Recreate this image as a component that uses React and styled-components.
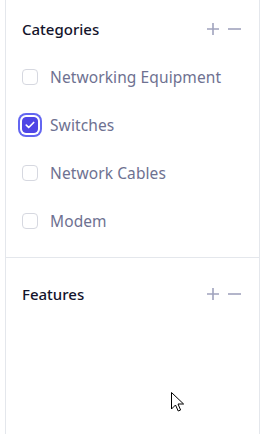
import styled, { createGlobalStyle } from 'styled-components';

const GlobalStyle = createGlobalStyle`
  html, body {
    margin: 0;
    padding: 0;
    background: #fff;
    font-family: "Noto Sans", "Liberation Sans", sans-serif;
  }
`;

const Page = styled.div`
  position: relative;
  width: 261px;
  height: 434px;
  padding-left: 5px;
  box-sizing: border-box;
  overflow: hidden;
`;

const Panel = styled.aside`
  width: 255px;
  height: 100%;
  box-sizing: border-box;
  border-left: 1px solid #e4e7ec;
  border-right: 1px solid #e4e7ec;
  background: #fff;
`;

const Section = styled.section`
  padding: ${props => (props.divided ? '16px 17px 24px 16px' : '23px 17px 0 16px')};
  border-bottom: ${props => (props.divided ? '1px solid #e4e7ec' : 'none')};
`;

const Header = styled.div`
  display: flex;
  align-items: center;
  justify-content: space-between;
  height: 26px;
`;

const Title = styled.h3`
  margin: 0;
  font-size: 15px;
  font-weight: 500;
  color: #14142b;
`;

const Tools = styled.div`
  display: flex;
  align-items: center;
  gap: 9px;
  padding-right: 1px;
  color: #a0a3bd;
`;

const ToolButton = styled.button`
  display: flex;
  padding: 0;
  border: 0;
  background: none;
  color: inherit;
  cursor: pointer;
`;

const List = styled.ul`
  list-style: none;
  margin: 23px 0 0;
  padding: 0;
  display: flex;
  flex-direction: column;
  gap: 24px;
`;

const Item = styled.li`
  display: flex;
  align-items: center;
  gap: 12px;
  height: 24px;
`;

const Box = styled.span`
  flex-shrink: 0;
  display: flex;
  align-items: center;
  justify-content: center;
  width: 16px;
  height: 16px;
  box-sizing: border-box;
  border-radius: 4px;
  border: 1px solid ${props => (props.checked ? '#4f46e5' : '#d6d8e0')};
  background: ${props => (props.checked ? '#4f46e5' : '#fff')};
  box-shadow: ${props => (props.checked ? '0 0 0 2px #fff, 0 0 0 4px #6366f1' : 'none')};
`;

const Label = styled.span`
  font-size: 15.5px;
  letter-spacing: 0.1px;
  color: #6e7191;
`;

const Cursor = styled.svg`
  position: absolute;
  left: 171px;
  top: 392px;
`;

const PlusIcon = () => (
  <svg width="12" height="12" viewBox="0 0 12 12">
    <path d="M6 0v12M0 6h12" stroke="currentColor" strokeWidth="1.6" />
  </svg>
);

const MinusIcon = () => (
  <svg width="13" height="12" viewBox="0 0 13 12">
    <path d="M0 6h13" stroke="currentColor" strokeWidth="1.6" />
  </svg>
);

const Check = () => (
  <svg width="10" height="8" viewBox="0 0 10 8">
    <path d="M1.3 4.2l2.4 2.3 5-5" fill="none" stroke="#fff" strokeWidth="1.7" strokeLinecap="round" strokeLinejoin="round" />
  </svg>
);

const categories = [
  { name: 'Networking Equipment', checked: false },
  { name: 'Switches', checked: true },
  { name: 'Network Cables', checked: false },
  { name: 'Modem', checked: false },
];

const FilterHeader = ({ title }) => (
  <Header>
    <Title>{title}</Title>
    <Tools>
      <ToolButton aria-label="Expand"><PlusIcon /></ToolButton>
      <ToolButton aria-label="Collapse"><MinusIcon /></ToolButton>
    </Tools>
  </Header>
);

export default function App() {
  return (
    <>
      <GlobalStyle />
      <Page>
        <Panel>
          <Section divided>
            <FilterHeader title="Categories" />
            <List>
              {categories.map(c => (
                <Item key={c.name}>
                  <Box checked={c.checked}>{c.checked && <Check />}</Box>
                  <Label>{c.name}</Label>
                </Item>
              ))}
            </List>
          </Section>
          <Section>
            <FilterHeader title="Features" />
          </Section>
        </Panel>
        <Cursor width="13" height="20" viewBox="0 0 13 20">
          <path d="M0.5 0.5v16.5l4-4 2.7 6 2.4-1-2.6-6h5.6z" fill="#fff" stroke="#000" strokeWidth="1" strokeLinejoin="round" />
        </Cursor>
      </Page>
    </>
  );
}
